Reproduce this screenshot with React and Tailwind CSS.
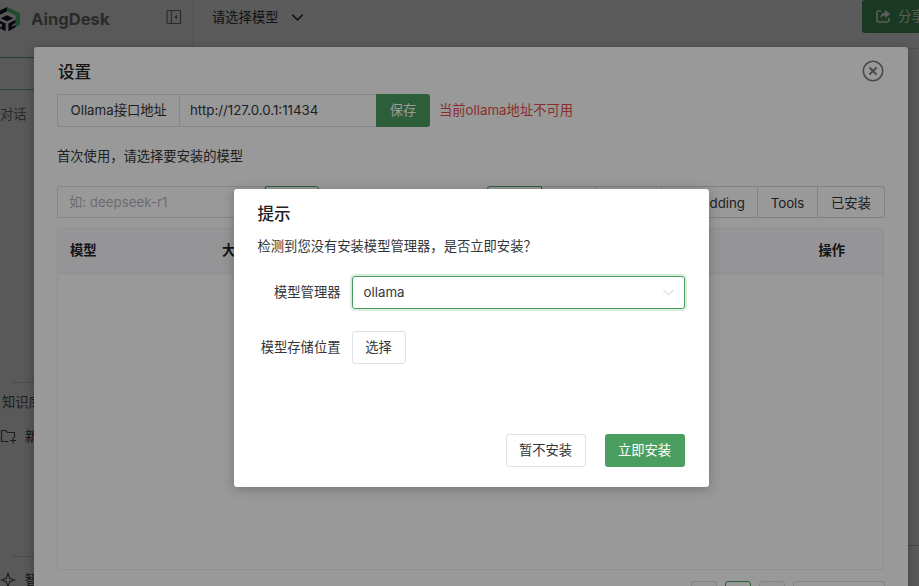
import { ChevronDown } from "lucide-react";

const filters = [
  { name: "", width: "w-[55px]", active: true },
  { name: "", width: "w-[54px]" },
  { name: "", width: "w-[66px]" },
  { name: "Embedding", width: "w-[96px]" },
  { name: "Tools", width: "w-[60px]" },
  { name: "已安装", width: "w-[67px]" },
];

function Logo() {
  return (
    <svg className="-ml-[7px] h-[26px] w-[28px] shrink-0" viewBox="0 0 28 26">
      <path d="M14 1 27 7.3V18.8L22.8 21.3V9.8L14 5.3z" fill="#52d67c" />
      <path d="M14 1v4.3L5 9.8v2.4L1 10V7.3z" fill="#101827" />
      <path d="M14 9.2 20.3 12.2 14 15.2 7.7 12.2z" fill="#101827" />
      <path d="M1 11.8 12.6 17.5V25.2L1 19.3z M5 16.4v3l4 2v-3z" fill="#101827" fillRule="evenodd" />
      <path d="M15.4 17.5 22.6 13.8V17L18.8 19.2V20.8L22.6 18.8V21.3L15.4 25.2z" fill="#101827" />
    </svg>
  );
}

function Sidebar() {
  return (
    <aside className="flex w-[193px] shrink-0 flex-col border-r border-[#efeff5] bg-[#f9f9f9]">
      <div className="flex h-[57px] shrink-0 items-start">
        <div className="flex w-full items-center pt-[6px]">
          <Logo />
          <span className="ml-[10px] text-[16.6px] font-bold text-[#777]">AingDesk</span>
          <svg className="-mt-[5px] ml-auto mr-[10px] h-4 w-4" viewBox="0 0 16 16" fill="none" stroke="#777" strokeWidth="1.2">
            <rect x="1" y="1.5" width="13.5" height="13" rx="1" />
            <path d="M5.3 1.5v13" />
            <path d="M11 5.8 8.3 8l2.7 2.2z" fill="#777" stroke="none" />
          </svg>
        </div>
      </div>
      <div className="h-[33px] shrink-0 border-b border-t border-b-[#7fc796] border-t-[#55b673]" />
      <div className="mt-[14px] text-[13.3px] leading-5 text-[#777]">对话</div>
      <div className="ml-3 mt-[258px] shrink-0 border-t border-[#d5d5d5]" />
      <div className="mt-[9px] pl-[2px] text-[13.3px] leading-5 text-[#555]">知识库</div>
      <div className="mt-[14px] flex items-center text-[13.3px] leading-5">
        <svg className="h-4 w-4" viewBox="0 0 16 16" fill="none" stroke="#555" strokeWidth="1.2">
          <path d="M8.5 13.5h-7v-11h4l2 2h7v5M10 12.5h6M13 9.5v6" />
        </svg>
        <span className="ml-[9px]">新建</span>
      </div>
      <div className="ml-3 mt-[110px] shrink-0 border-t border-[#d5d5d5]" />
      <div className="mt-[13px] flex items-center text-[13.3px] leading-5">
        <svg className="h-4 w-4" viewBox="0 0 16 16" fill="none" stroke="#555" strokeWidth="1.2">
          <path d="M8 1.5 9.8 6.2 14.5 8l-4.7 1.8L8 14.5 6.2 9.8 1.5 8l4.7-1.8z" />
        </svg>
        <span className="ml-[9px]">智能体</span>
      </div>
    </aside>
  );
}

function Page() {
  return (
    <div className="flex h-full">
      <Sidebar />
      <main className="flex min-w-0 flex-1 flex-col bg-[#fdfdfd]">
        <header className="flex h-[49px] shrink-0 items-start justify-between border-b border-[#e5e5e5]">
          <div className="flex items-center gap-[10px] pl-[19px] pt-[7px] leading-5">
            <span>请选择模型</span>
            <ChevronDown size={19} strokeWidth={2} />
          </div>
          <button className="flex h-[33px] w-[57px] shrink-0 items-center overflow-hidden whitespace-nowrap rounded-l-[3px] bg-[#4a9e60] pl-[14px] text-white">
            <svg className="mr-[7px] h-[15px] w-[15px] shrink-0" viewBox="0 0 15 15" fill="none" stroke="currentColor" strokeWidth="1.7">
              <path d="M5 2H2.5Q1 2 1 3.5v8Q1 13 2.5 13h9q1.5 0 1.5-1.5V9" />
              <path d="M9 1l5.5 4L9 9V6.5Q6 6.5 4 9q.5-5 5-5.5z" fill="currentColor" stroke="none" />
            </svg>
            分享
          </button>
        </header>
        <div className="flex-1" />
        <footer className="h-[41px] border-t border-[#c5c5c5]" />
      </main>
    </div>
  );
}

function SettingsModal() {
  return (
    <section className="ml-[34px] mt-[47px] flex h-[580px] w-[874px] shrink-0 flex-col rounded-[3px] bg-white px-[23px] shadow-[0_2px_12px_rgba(0,0,0,0.3)]">
      <div className="mt-[13px] flex h-[22px] items-center justify-between">
        <h2 className="pl-[1px] pt-[2px] text-[16.6px] font-medium text-[#1f2225]">设置</h2>
        <svg className="mr-[1px] h-[22px] w-[22px]" viewBox="0 0 22 22" fill="none" stroke="#767c82" strokeWidth="1.6">
          <circle cx="11" cy="11" r="9.7" />
          <path d="m7.5 7.5 7 7m0-7-7 7" strokeWidth="2" />
        </svg>
      </div>

      <div className="mt-3 flex h-[33px] shrink-0 items-center">
        <div className="flex h-full w-[123px] items-center rounded-l-[3px] border border-[#e0e0e6] pl-[12.5px]">Ollama接口地址</div>
        <div className="flex h-full w-[196px] items-center border-y border-[#e0e0e6] pl-[10px]">http://127.0.0.1:11434</div>
        <button className="h-full w-[54px] rounded-r-[3px] bg-[#4a9e60] text-white">保存</button>
        <span className="ml-[9px] text-[#e94b4b]">当前ollama地址不可用</span>
      </div>

      <p className="mt-[19px] leading-5">首次使用，请选择要安装的模型</p>

      <div className="mt-5 flex h-[32px] shrink-0 justify-between">
        <div className="flex">
          <div className="flex w-[208px] items-center rounded-l-[3px] border border-[#e0e0e6] pl-[11px] pt-[2px] text-[#b5b5bd]">如: deepseek-r1</div>
          <div className="w-[54px] rounded-r-[3px] border border-[#4a9e60]" />
        </div>
        <div className="flex">
          {filters.map((f, i) => (
            <div
              key={i}
              className={`flex items-center justify-center border pt-[3px] ${f.width} ${
                f.active ? "rounded-l-[3px] border-[#4a9e60]" : "border-l-0 border-[#d8d8de] last:rounded-r-[3px]"
              }`}
            >
              {f.name}
            </div>
          ))}
        </div>
      </div>

      <div className="mr-[1px] mt-[10px] flex h-[342px] shrink-0 flex-col rounded-[3px] border border-[#efeff5]">
        <div className="flex h-[45px] items-center border-b border-[#efeff5] bg-[#f8f8fc] font-semibold text-[#1f2225]">
          <span className="w-[164px] pl-[12px]">模型</span>
          <span>大小</span>
          <span className="ml-auto mr-[38px]">操作</span>
        </div>
      </div>

      <div className="mt-[11px] flex justify-end gap-2">
        <div className="h-7 w-[26px] rounded-[3px] border border-[#e0e0e6] bg-[#fafafc]" />
        <div className="h-7 w-[26px] rounded-[3px] border border-[#4a9e60]" />
        <div className="h-7 w-[26px] rounded-[3px] border border-[#e0e0e6] bg-[#fafafc]" />
        <div className="h-7 w-[92px] rounded-[3px] border border-[#e0e0e6]" />
      </div>
    </section>
  );
}

function InstallDialog() {
  return (
    <section className="ml-[233.5px] mt-[189px] flex h-[297.5px] w-[475px] flex-col rounded-[3px] bg-white px-6 shadow-[0_2px_12px_rgba(0,0,0,0.25)]">
      <h2 className="mt-[14px] text-[16.6px] font-medium leading-[22px] text-[#1f2225]">提示</h2>
      <p className="mt-[11px] leading-5">检测到您没有安装模型管理器，是否立即安装？</p>
      <div className="mt-[20px] flex items-center">
        <label className="w-[83px] pt-[1px] text-right">模型管理器</label>
        <div className="ml-[11px] flex h-[33px] w-[333px] items-center justify-between rounded-[3px] border border-[#4a9e60] pl-[11px] pr-[6px] shadow-[0_0_0_2px_rgba(74,158,96,0.2)]">
          <span>ollama</span>
          <ChevronDown size={19} strokeWidth={1.2} color="#c2c2c2" />
        </div>
      </div>
      <div className="mt-[22px] flex items-center">
        <label className="w-[83px] pt-[1px] text-right">模型存储位置</label>
        <button className="ml-[11px] h-[33px] w-[54px] rounded-[3px] border border-[#e0e0e6] pt-[1px]">选择</button>
      </div>
      <div className="mb-5 mt-auto flex justify-end gap-[19px]">
        <button className="h-[33px] w-[80px] rounded-[3px] border border-[#e0e0e6] pt-[1px]">暂不安装</button>
        <button className="h-[33px] w-[80px] rounded-[3px] bg-[#4a9e60] pt-[1px] text-white">立即安装</button>
      </div>
    </section>
  );
}

export default function App() {
  return (
    <div className="relative h-[586px] w-[919px] overflow-hidden font-[Inter,'Noto_Sans_CJK_SC',sans-serif] text-[13.3px] text-[#333639]">
      <Page />
      <div className="absolute inset-0 flex items-start overflow-hidden bg-black/40">
        <SettingsModal />
      </div>
      <div className="absolute inset-0 flex items-start bg-black/40">
        <InstallDialog />
      </div>
    </div>
  );
}
